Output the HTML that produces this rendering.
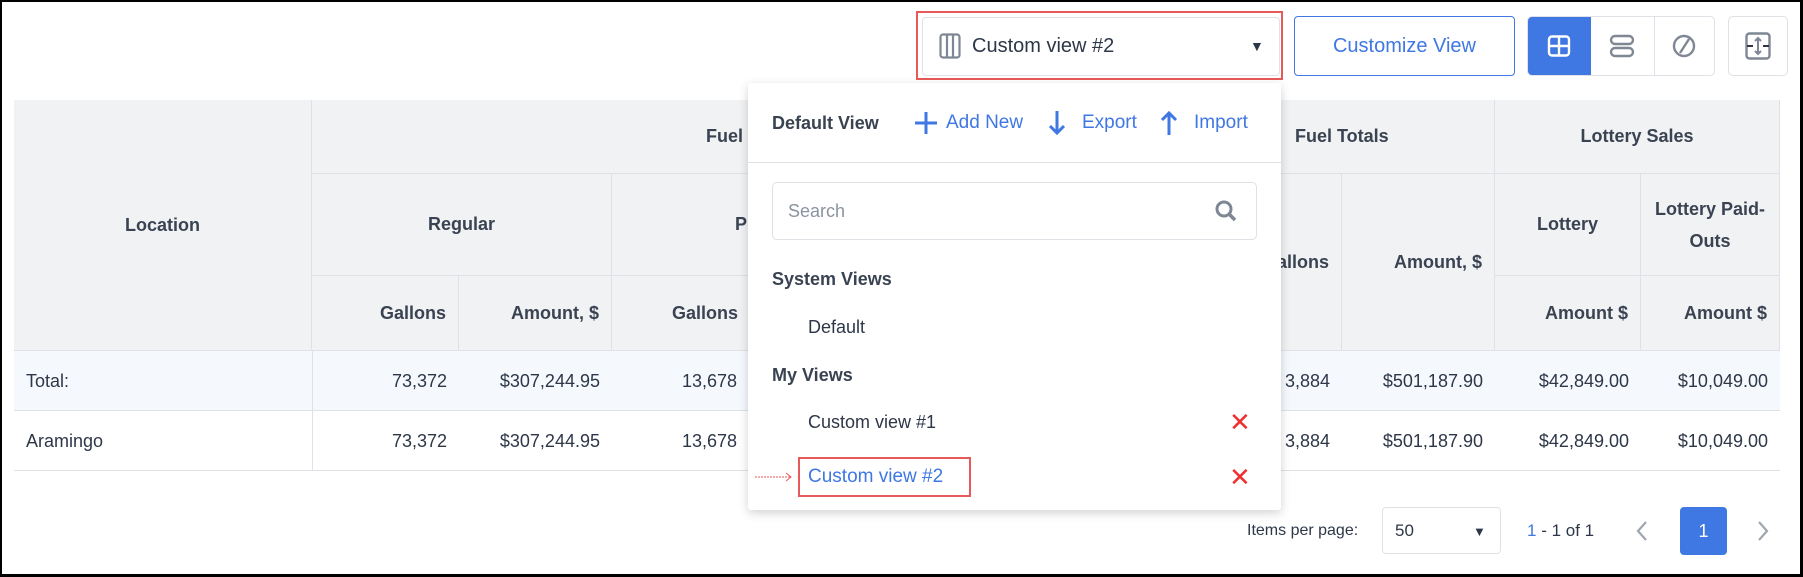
<!DOCTYPE html>
<html><head><meta charset="utf-8"><style>
*{box-sizing:border-box;margin:0;padding:0}
body{width:1803px;height:577px;overflow:hidden;background:#fff;font-family:"Liberation Sans",Arial,sans-serif;color:#2d3748;position:relative}
.frame{position:absolute;left:0;top:0;width:1803px;height:577px;border:2px solid #000;border-right-width:3px;border-bottom-width:3px;z-index:50;pointer-events:none}
.a{position:absolute}
.c{position:absolute;display:flex;align-items:center;font-size:18px;color:#2d3748}
.hd{background:#f1f2f4;border-right:1px solid #dfe1e6;border-bottom:1px solid #dfe1e6;justify-content:center;text-align:center;font-weight:bold;color:#3a4352}
.b{font-weight:bold;color:#3a4352}
.r{justify-content:flex-end;padding-right:12px}
.blue{color:#3f77e3}
</style></head><body>
<div class="frame"></div>

<div class="a" style="left:916px;top:11px;width:367px;height:69px;border:2px solid #e85a5a"></div>
<div class="a" style="left:922px;top:17px;width:358px;height:59px;border:1px solid #dfe1e6;border-radius:4px"></div>
<svg class="a" style="left:939px;top:33px" width="22" height="26" viewBox="0 0 22 26"><rect x="1.5" y="1.5" width="19" height="23" rx="2.5" fill="none" stroke="#7f8794" stroke-width="2.2"/><line x1="8" y1="2" x2="8" y2="24" stroke="#7f8794" stroke-width="2.2"/><line x1="14" y1="2" x2="14" y2="24" stroke="#7f8794" stroke-width="2.2"/></svg>
<div class="c" style="left:972px;top:28px;height:36px;font-size:20px">Custom view #2</div>
<div class="c" style="left:1250px;top:28px;height:36px;font-size:14px;color:#2d3748">▼</div>

<div class="c blue" style="left:1294px;top:16px;width:221px;height:60px;border:1px solid #3f77e3;border-radius:4px;justify-content:center;font-size:20px">Customize View</div>

<div class="a" style="left:1527px;top:16px;width:188px;height:60px;border:1px solid #dfe1e6;border-radius:5px;overflow:hidden">
 <div class="a" style="left:0;top:0;width:63px;height:60px;background:#3f77e3"></div>
 <div class="a" style="left:126px;top:0;width:1px;height:60px;background:#dfe1e6"></div>
</div>
<svg class="a" style="left:1547px;top:35px" width="24" height="22" viewBox="0 0 24 22"><rect x="2" y="1.5" width="20" height="19" rx="3" fill="none" stroke="#fff" stroke-width="2.4"/><line x1="12" y1="2" x2="12" y2="20" stroke="#fff" stroke-width="2.4"/><line x1="2" y1="11" x2="22" y2="11" stroke="#fff" stroke-width="2.4"/></svg>
<svg class="a" style="left:1609px;top:34px" width="26" height="24" viewBox="0 0 26 24"><rect x="2" y="2" width="22" height="8" rx="4" fill="none" stroke="#7f8794" stroke-width="2.4"/><rect x="2" y="14" width="22" height="8" rx="4" fill="none" stroke="#7f8794" stroke-width="2.4"/></svg>
<svg class="a" style="left:1672px;top:34px" width="24" height="24" viewBox="0 0 24 24"><circle cx="12" cy="12" r="10" fill="none" stroke="#7f8794" stroke-width="2.4"/><path d="M17 5 L8 19" fill="none" stroke="#7f8794" stroke-width="2.4"/></svg>
<div class="a" style="left:1728px;top:16px;width:60px;height:60px;border:1px solid #dfe1e6;border-radius:5px"></div>
<svg class="a" style="left:1745px;top:32px" width="26" height="28" viewBox="0 0 26 28"><rect x="1.5" y="1.5" width="23" height="25" rx="3" fill="none" stroke="#7f8794" stroke-width="2.4"/><line x1="2" y1="14" x2="8" y2="14" stroke="#2d3748" stroke-width="2"/><line x1="18" y1="14" x2="24" y2="14" stroke="#2d3748" stroke-width="2"/><path d="M13 6 V22 M10 9 L13 6 L16 9 M10 19 L13 22 L16 19" fill="none" stroke="#7f8794" stroke-width="2"/></svg>

<div class="c hd" style="left:14px;top:100px;width:298px;height:251px">Location</div>
<div class="c hd" style="left:312px;top:100px;width:910px;height:74px;padding-left:394px;justify-content:flex-start">Fuel</div>
<div class="c hd" style="left:1222px;top:100px;width:273px;height:74px;justify-content:flex-start;padding-left:73px">Fuel Totals</div>
<div class="c hd" style="left:1495px;top:100px;width:285px;height:74px">Lottery Sales</div>
<div class="c hd" style="left:312px;top:174px;width:300px;height:102px">Regular</div>
<div class="c hd" style="left:612px;top:174px;width:610px;height:102px;justify-content:flex-start;padding-left:123px">P</div>
<div class="c hd" style="left:1222px;top:174px;width:120px;height:177px;justify-content:flex-end;padding-right:12px">allons</div>
<div class="c hd" style="left:1342px;top:174px;width:153px;height:177px;justify-content:flex-end;padding-right:12px">Amount, $</div>
<div class="c hd" style="left:1495px;top:174px;width:146px;height:102px">Lottery</div>
<div class="c hd" style="left:1641px;top:174px;width:139px;height:102px;line-height:32px">Lottery Paid-<br>Outs</div>
<div class="c hd r" style="left:312px;top:276px;width:147px;height:75px">Gallons</div>
<div class="c hd r" style="left:459px;top:276px;width:153px;height:75px">Amount, $</div>
<div class="c hd" style="left:612px;top:276px;width:610px;height:75px;justify-content:flex-start;padding-left:60px">Gallons</div>
<div class="c hd r" style="left:1495px;top:276px;width:146px;height:75px">Amount $</div>
<div class="c hd r" style="left:1641px;top:276px;width:139px;height:75px">Amount $</div>

<div class="a" style="left:14px;top:351px;width:1766px;height:60px;background:#f5f9fd;border-bottom:1px solid #dfe1e6"></div>
<div class="a" style="left:14px;top:411px;width:1766px;height:60px;border-bottom:1px solid #dfe1e6"></div>
<div class="a" style="left:312px;top:351px;width:1px;height:120px;background:#dfe1e6"></div>
<div class="c" style="left:26px;top:351px;height:60px">Total:</div>
<div class="c" style="left:26px;top:411px;height:60px">Aramingo</div>
<div class="c r" style="left:312px;top:351px;width:147px;height:60px">73,372</div>
<div class="c r" style="left:459px;top:351px;width:153px;height:60px">$307,244.95</div>
<div class="c" style="left:682px;top:351px;height:60px">13,678</div>
<div class="c r" style="left:1222px;top:351px;width:120px;height:60px">3,884</div>
<div class="c r" style="left:1342px;top:351px;width:153px;height:60px">$501,187.90</div>
<div class="c r" style="left:1495px;top:351px;width:146px;height:60px">$42,849.00</div>
<div class="c r" style="left:1641px;top:351px;width:139px;height:60px">$10,049.00</div>
<div class="c r" style="left:312px;top:411px;width:147px;height:60px">73,372</div>
<div class="c r" style="left:459px;top:411px;width:153px;height:60px">$307,244.95</div>
<div class="c" style="left:682px;top:411px;height:60px">13,678</div>
<div class="c r" style="left:1222px;top:411px;width:120px;height:60px">3,884</div>
<div class="c r" style="left:1342px;top:411px;width:153px;height:60px">$501,187.90</div>
<div class="c r" style="left:1495px;top:411px;width:146px;height:60px">$42,849.00</div>
<div class="c r" style="left:1641px;top:411px;width:139px;height:60px">$10,049.00</div>

<div class="c" style="left:1247px;top:515px;height:32px;font-size:16px">Items per page:</div>
<div class="a" style="left:1382px;top:507px;width:119px;height:47px;border:1px solid #dfe1e6;border-radius:4px"></div>
<div class="c" style="left:1395px;top:515px;height:32px;font-size:17px">50</div>
<div class="c" style="left:1473px;top:515px;height:32px;font-size:13px">▼</div>
<div class="c" style="left:1527px;top:515px;height:32px;font-size:17px"><span class="blue">1</span>&nbsp;- 1 of 1</div>
<svg class="a" style="left:1635px;top:520px" width="14" height="22" viewBox="0 0 14 22"><path d="M11 2 L3 11 L11 20" fill="none" stroke="#a0a6b0" stroke-width="2.2"/></svg>
<div class="c" style="left:1680px;top:507px;width:47px;height:48px;background:#3f77e3;border-radius:4px;color:#fff;justify-content:center">1</div>
<svg class="a" style="left:1756px;top:520px" width="14" height="22" viewBox="0 0 14 22"><path d="M3 2 L11 11 L3 20" fill="none" stroke="#a0a6b0" stroke-width="2.2"/></svg>

<div class="a" style="left:748px;top:83px;width:533px;height:427px;background:#fff;box-shadow:0 3px 10px rgba(0,0,0,.18);border-radius:3px;z-index:10">
 <div class="c b" style="left:24px;top:7px;height:66px">Default View</div>
 <svg class="a" style="left:166px;top:28px" width="24" height="24" viewBox="0 0 24 24"><path d="M12 1 V23 M1 12 H23" stroke="#3f77e3" stroke-width="3"/></svg>
 <div class="c blue" style="left:198px;top:7px;height:66px;font-size:19px">Add New</div>
 <svg class="a" style="left:300px;top:27px" width="18" height="26" viewBox="0 0 18 26"><path d="M9 1 V23 M2 16 L9 23 L16 16" fill="none" stroke="#3f77e3" stroke-width="3"/></svg>
 <div class="c blue" style="left:334px;top:7px;height:66px;font-size:19px">Export</div>
 <svg class="a" style="left:412px;top:27px" width="18" height="26" viewBox="0 0 18 26"><path d="M9 25 V3 M2 10 L9 3 L16 10" fill="none" stroke="#3f77e3" stroke-width="3"/></svg>
 <div class="c blue" style="left:446px;top:7px;height:66px;font-size:19px">Import</div>
 <div class="a" style="left:0;top:79px;width:533px;height:1px;background:#dfe1e6"></div>
 <div class="a" style="left:24px;top:99px;width:485px;height:58px;border:1px solid #dfe1e6;border-radius:5px"></div>
 <div class="c" style="left:40px;top:99px;height:58px;color:#8a93a0">Search</div>
 <svg class="a" style="left:466px;top:116px" width="24" height="24" viewBox="0 0 24 24"><circle cx="10" cy="10" r="7" fill="none" stroke="#7f8794" stroke-width="3"/><path d="M15 15 L21 21" stroke="#7f8794" stroke-width="3.5"/></svg>
 <div class="c b" style="left:24px;top:180px;height:32px">System Views</div>
 <div class="c" style="left:60px;top:228px;height:32px">Default</div>
 <div class="c b" style="left:24px;top:276px;height:32px">My Views</div>
 <div class="c" style="left:60px;top:323px;height:32px">Custom view #1</div>
 <div class="c" style="left:481px;top:323px;height:32px;color:#f03030;font-size:26px">✕</div>
 <div class="a" style="left:50px;top:374px;width:173px;height:40px;border:2px solid #e85a5a"></div>
 <div class="c blue" style="left:60px;top:374px;height:40px;font-size:19px">Custom view #2</div>
 <div class="c" style="left:481px;top:374px;height:40px;color:#f03030;font-size:26px">✕</div>
 <svg class="a" style="left:6px;top:388px" width="40" height="12" viewBox="0 0 40 12"><path d="M1 6 H36" stroke="#e85a5a" stroke-width="1" stroke-dasharray="2 1"/><path d="M32 2 L37 6 L32 10" fill="none" stroke="#e85a5a" stroke-width="1"/></svg>
</div>
</body></html>
